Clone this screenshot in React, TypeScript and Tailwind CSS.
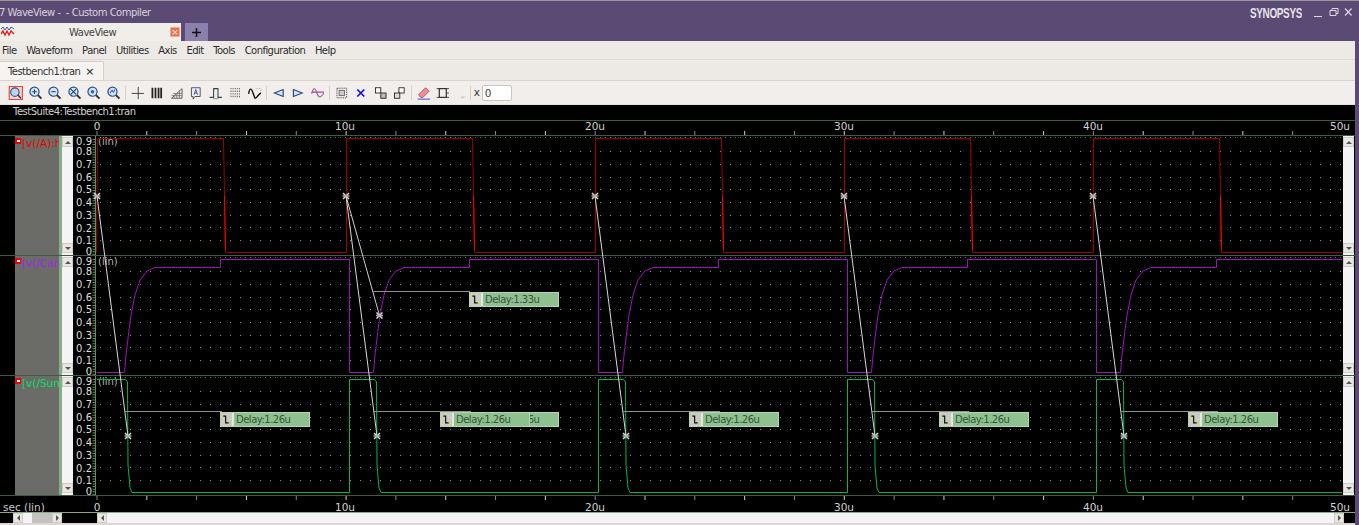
import type { ReactNode } from "react";

const FONT = "font-['DejaVu_Sans','Liberation_Sans',sans-serif]";
const PERIODS = [0, 249, 498, 747, 996];
const GRID = [151.5, 164.5, 177.5, 189.5, 202.5, 215.5, 227.5, 240.5];
const YLABELS: [string, number][] = [
  ["0.9", 145], ["0.8", 155], ["0.7", 168], ["0.6", 180.7], ["0.5", 193.4],
  ["0.4", 206], ["0.3", 219], ["0.2", 231.7], ["0.1", 244.4], ["0", 254.5],
];
const MINOR = Array.from({ length: 25 }, (_, i) => 97 + i * 49.82);
const MAJOR: [string, number][] = [["0", 97], ["10u", 345], ["20u", 595], ["30u", 844], ["40u", 1093], ["50u", 1342]];

function redWave() {
  let d = "M96.5,252.5 L97.5,138.5";
  PERIODS.forEach((o, k) => {
    if (k > 0) d += ` L${97.5 + o},252.5 L${97.5 + o},138.5`;
    d += ` L${223.5 + o},138.5 L${225.5 + o},252.5`;
  });
  return d + " L1342,252.5";
}

function purpleWave() {
  let d = "M97,252.5";
  PERIODS.forEach((o, k) => {
    if (k > 0) d += ` L${100.5 + o},139.5 L${100.5 + o},252.5`;
    d += ` L${124.5 + o},252.5 L${126 + o},235 L${129 + o},210 L${131 + o},195 L${135 + o},175 L${140 + o},160 L${147 + o},151 L${155 + o},147.5 L${165 + o},147.5 L${220.5 + o},147.5 L${220.5 + o},139.5`;
  });
  return d + " L1342,139.5";
}

function greenWave() {
  let d = "M97,139.5";
  PERIODS.forEach((o, k) => {
    if (k > 0) d += ` L${100.5 + o},252.5 L${100.5 + o},139.5`;
    d += ` L${125.5 + o},139.5 L${127.5 + o},142 L${128 + o},225 L${130 + o},248 L${132 + o},252.5`;
  });
  return d + " L1342,252.5";
}

function SmallArrow({ up }: { up?: boolean }) {
  return (
    <div className="h-[10px] w-full bg-[#e9e7e3] border border-[#cfcdc8] flex items-center justify-center">
      <div className={up
        ? "w-0 h-0 border-l-[3px] border-r-[3px] border-b-[3px] border-l-transparent border-r-transparent border-b-[#555]"
        : "w-0 h-0 border-l-[3px] border-r-[3px] border-t-[3px] border-l-transparent border-r-transparent border-t-[#555]"} />
    </div>
  );
}

function VScroll() {
  return (
    <div className="w-[11px] h-full bg-[#f5f3f5] flex flex-col justify-between pt-px pb-[2px]">
      <SmallArrow up />
      <SmallArrow />
    </div>
  );
}

function Panel({ label, color, children }: { label: string; color: string; children: ReactNode }) {
  return (
    <div className="h-[120px] flex border-b border-[#3e5a40]">
      <div className="w-[15px] bg-black" />
      <div className="w-[44px] bg-[#6b6c68] overflow-hidden whitespace-nowrap flex items-start pt-[2px] gap-px">
        <div className="w-[6px] h-[6px] shrink-0 bg-[#f00000] flex items-center justify-center">
          <div className="w-[3px] h-[2px] bg-white" />
        </div>
        <span className={`text-[10.5px] leading-[10px] ${color}`}>{label}</span>
      </div>
      <div className="w-[3px] bg-[#86ad88]" />
      <VScroll />
      <svg className="w-[1270px] h-[119px] shrink-0 bg-black" viewBox="73 136 1270 119">
        {GRID.map((y) => (
          <line key={y} x1="100" x2="1342" y1={y} y2={y} stroke="#8a8a8a" strokeWidth="1" strokeDasharray="1 9" />
        ))}
        <line x1="100" x2="1342" y1="137.5" y2="137.5" stroke="#666" strokeDasharray="1 4" />
        <line x1="95.5" x2="95.5" y1="136" y2="255" stroke="#5f8f62" />
        <line x1="94" x2="94" y1="139" y2="255" stroke="#5f8f62" strokeWidth="3" strokeDasharray="1 1.55" />
        {YLABELS.map(([t, y]) => (
          <text key={t} x="92" y={y} textAnchor="end" fontSize="10" fill="#dcdcdc" fontFamily="DejaVu Sans">{t}</text>
        ))}
        <text x="98" y="145" fontSize="10" fill="#b5b5b5" fontFamily="DejaVu Sans">(lin)</text>
        {children}
      </svg>
      <VScroll />
    </div>
  );
}

function StepIcon() {
  return (
    <svg viewBox="0 0 13 13" className="w-[13px] h-full shrink-0 bg-[#c9cbc4] border-r-2 border-[#dfe9dc]">
      <path d="M2,2.5 H5.5 V10.5 H10" fill="none" stroke="#111" strokeWidth="1.4" />
      <rect x="0.8" y="1.5" width="2" height="2" fill="#e8e000" />
      <rect x="9" y="9.5" width="2" height="2" fill="#e8e000" />
    </svg>
  );
}

function DelayTag({ value, className }: { value: string; className: string }) {
  return (
    <div className={`absolute flex w-[90px] h-[15px] bg-[#8fc08f] border border-[#b5d4b5] text-[#35553a] text-[10px] tracking-[-0.5px] leading-[13px] whitespace-nowrap overflow-hidden ${className}`}>
      <StepIcon />
      <span className="pl-[2px]">{value}</span>
    </div>
  );
}

function Marker({ x, y }: { x: number; y: number }) {
  return (
    <g stroke="#dcdcdc" strokeWidth="1.5">
      <line x1={x - 3} y1={y - 3} x2={x + 3} y2={y + 3} />
      <line x1={x - 3} y1={y + 3} x2={x + 3} y2={y - 3} />
      <line x1={x - 3.5} y1={y} x2={x + 3.5} y2={y} stroke="#a8a8a8" />
    </g>
  );
}

function Slot({ children }: { children: ReactNode }) {
  return (
    <svg viewBox="0 0 16 16" className="w-[19.6px] h-[14px] shrink-0" fill="none" stroke="#222" strokeWidth="1">
      {children}
    </svg>
  );
}

function Sep() {
  return (
    <div className="w-[4px] shrink-0 flex justify-center">
      <div className="w-px h-[14px] bg-[#d4d1cc]" />
    </div>
  );
}

function Mag({ children }: { children?: ReactNode }) {
  return (
    <>
      <circle cx="6.5" cy="6.5" r="5.2" fill="#d5e4f5" stroke="#2c4f86" strokeWidth="1.4" />
      <line x1="10.3" y1="10.3" x2="14.5" y2="14.5" stroke="#333" strokeWidth="2.2" />
      {children}
    </>
  );
}

function Toolbar() {
  return (
    <div className="h-[24px] bg-[#f2eeec] flex items-center pl-[6px] border-b border-[#e3e0dc]">
      <Slot>
        <rect x="0.5" y="0.5" width="15" height="15" fill="#f7d9d2" stroke="#e0483a" strokeWidth="1.3" />
        <circle cx="7" cy="7" r="4.8" fill="#bcd4ee" stroke="#2c4f86" strokeWidth="1.3" />
        <line x1="10" y1="10" x2="14" y2="14" stroke="#333" strokeWidth="1.6" />
      </Slot>
      <Slot><Mag><path d="M4,6.5 H9 M6.5,4 V9" stroke="#1c3f78" strokeWidth="1.2" /></Mag></Slot>
      <Slot><Mag><path d="M4,6.5 H9" stroke="#1c3f78" strokeWidth="1.2" /></Mag></Slot>
      <Slot><Mag><path d="M3.5,3.5 L9.5,9.5 M9.5,3.5 L3.5,9.5" stroke="#1c3f78" strokeWidth="1.2" /></Mag></Slot>
      <Slot><Mag><circle cx="6.5" cy="6.5" r="2" fill="#2962c4" stroke="none" /></Mag></Slot>
      <Slot><Mag><path d="M3.5,8 L6,5 L7.5,7 L9.5,4" stroke="#2962c4" strokeWidth="1.2" /></Mag></Slot>
      <Sep />
      <Slot><path d="M8.5,1 V15 M1,8.5 H15" stroke="#333" /></Slot>
      <Slot><path d="M3,2 V14 M6.5,2 V14 M10,2 V14 M13,2 V14" stroke="#222" strokeWidth="2" /></Slot>
      <Slot>
        <path d="M2,14 H14 V3 Z" stroke="#555" />
        <path d="M5,14 V11 M8,14 V8 M11,14 V5 M2,11 H14 M4,8.5 H14" stroke="#777" />
      </Slot>
      <Slot>
        <path d="M3,2 H13 V12 H7 L5,15 V12 H3 Z" stroke="#444" />
        <path d="M6,10 L8,4 L10,10 M6.8,8 H9.2" stroke="#2348b8" />
      </Slot>
      <Slot><path d="M1,13 H5.5 V3 H10.5 V13 H15" stroke="#2c4a4a" strokeWidth="1.2" /><path d="M5,14.5 H11" stroke="#888" /></Slot>
      <Slot><path d="M2,3 H14 M2,6 H14 M2,9 H14 M2,12 H14" stroke="#555" strokeWidth="1.6" strokeDasharray="1 1.4" /></Slot>
      <Slot>
        <path d="M1,9 C2,2 4,2 6,8 S8,15 10,13 S13,9 15,8" stroke="#111" strokeWidth="1.6" />
        <path d="M9,3 H15 V8" stroke="#aaa" strokeDasharray="1 1" />
      </Slot>
      <Sep />
      <Slot><path d="M13,4 V12 L3,8 Z" fill="#d7e2f0" stroke="#23497f" strokeWidth="1.3" /></Slot>
      <Slot><path d="M3,4 V12 L13,8 Z" fill="#d7e2f0" stroke="#23497f" strokeWidth="1.3" /></Slot>
      <Slot><path d="M1,9 C3,1 5,2 7,8 S11,14 15,8" stroke="#777" strokeWidth="1.2" /><path d="M1,7 H15" stroke="#d02bb0" strokeWidth="1.4" /></Slot>
      <Sep />
      <Slot>
        <rect x="2.5" y="2.5" width="11" height="11" stroke="#444" strokeDasharray="1.5 1" />
        <rect x="5" y="5" width="6" height="6" fill="#ccc" stroke="#666" />
      </Slot>
      <Slot><path d="M4,4 L12,12 M12,4 L4,12" stroke="#1010e0" strokeWidth="2" /></Slot>
      <Slot>
        <rect x="2" y="2" width="6" height="6" fill="#fff" stroke="#222" />
        <rect x="8" y="8" width="6" height="6" fill="#bbb" stroke="#222" />
      </Slot>
      <Slot>
        <rect x="7" y="2" width="6" height="6" fill="#fff" stroke="#222" />
        <rect x="2" y="8" width="6" height="6" fill="#ddd" stroke="#222" />
      </Slot>
      <Sep />
      <Slot>
        <path d="M2,10 L10,2 L14,6 L7,13 H4.5 Z" fill="#ec8f98" stroke="#b05060" />
        <path d="M1,15 H15" stroke="#1a3fd0" />
      </Slot>
      <Slot>
        <rect x="4" y="3" width="8" height="10" stroke="#333" strokeWidth="1.4" />
        <path d="M1,3 H4 M1,13 H4 M12,8 H15 M12,3 H15 M12,13 H15" stroke="#333" />
      </Slot>
      <Slot><path d="M5,12 H11 L8,14.5 Z" fill="#c9c9c9" stroke="none" /></Slot>
      <div className="w-px h-[14px] bg-[#d4d1cc] -ml-[3px] mr-[3px]" />
      <span className="text-[10.5px] text-[#333] w-[7px]">x</span>
      <div className="ml-[1px] w-[30px] h-[16px] bg-white border border-[#c9c6c1] rounded-[2px] text-[10.5px] leading-[14px] pl-[2px] text-[#444]">0</div>
    </div>
  );
}

const MENUS = ["File", "Waveform", "Panel", "Utilities", "Axis", "Edit", "Tools", "Configuration", "Help"];

function TopAxis() {
  return (
    <svg className="block w-[1355px] h-[14px] bg-black" viewBox="0 0 1355 14">
      {MINOR.map((x, i) => (
        <line key={i} x1={x} x2={x} y1="10" y2="14" stroke={i % 2 ? "#d0d0d0" : "#8a8a8a"} />
      ))}
      {MAJOR.map(([t, x]) => (
        <text key={t} x={x} y="9" textAnchor={t === "50u" ? "end" : "middle"} dx={t === "50u" ? 8 : 0} fontSize="10.5" fill="#d2d2d2" fontFamily="DejaVu Sans">{t}</text>
      ))}
    </svg>
  );
}

function BottomAxis() {
  return (
    <svg className="block w-[1355px] h-[16px] bg-black" viewBox="0 0 1355 16">
      {MINOR.map((x, i) => (
        <line key={i} x1={x} x2={x} y1="0" y2="4" stroke={i % 2 ? "#d0d0d0" : "#8a8a8a"} />
      ))}
      {MAJOR.map(([t, x]) => (
        <text key={t} x={x} y="15" textAnchor={t === "50u" ? "end" : "middle"} dx={t === "50u" ? 8 : 0} fontSize="10.5" fill="#d2d2d2" fontFamily="DejaVu Sans">{t}</text>
      ))}
      <text x="3" y="15" fontSize="10.5" fill="#c8c8c8" fontFamily="DejaVu Sans">sec (lin)</text>
    </svg>
  );
}

function HButton({ left }: { left?: boolean }) {
  return (
    <div className="w-[10px] h-full bg-[#e9e7e3] border border-[#cfcdc8] flex items-center justify-center shrink-0">
      <div className={left
        ? "w-0 h-0 border-t-[3px] border-b-[3px] border-r-[3px] border-t-transparent border-b-transparent border-r-[#555]"
        : "w-0 h-0 border-t-[3px] border-b-[3px] border-l-[3px] border-t-transparent border-b-transparent border-l-[#555]"} />
    </div>
  );
}

export default function App() {
  return (
    <div className={`w-[1359px] h-[525px] overflow-hidden bg-[#5b4a73] ${FONT} border-t border-[#9a96a0]`}>
      {/* title bar */}
      <div className="h-[22px] flex items-center pr-[7px] text-[#d6d2de] text-[10px] tracking-[-0.5px]">
        <span className="-ml-[1px] whitespace-pre">7 WaveView -  - Custom Compiler</span>
        <div className="flex-1" />
        <svg viewBox="0 0 52 13" className="w-[52px] h-[13px] mr-[10px]">
          <text x="0" y="12" fontSize="15" fontWeight="bold" fill="#e6e2ea" fontFamily="Liberation Sans" textLength="52" lengthAdjust="spacingAndGlyphs">SYNOPSYS</text>
        </svg>
        <svg viewBox="0 0 40 12" className="w-[40px] h-[12px]" stroke="#dcd8e2" fill="none">
          <path d="M2,10.5 H10" />
          <path d="M18,4.5 H24 V9.5 H18 Z M20,4.5 V2.5 H26 V7.5 H24" />
          <path d="M33,2.5 L39.5,9.5 M39.5,2.5 L33,9.5" strokeWidth="1.2" />
        </svg>
      </div>
      {/* window tabs */}
      <div className="h-[18px] flex items-stretch">
        <div className="w-[181px] bg-[#f1ede9] flex items-center relative">
          <svg viewBox="0 0 13 12" className="w-[13px] h-[12px] ml-px">
            <path d="M0,3 L2,1 L4,4 L6,1 L8,4 L10,1 L13,3" fill="none" stroke="#3460b0" />
            <path d="M0,8 L2,5 L4,9 L6,5 L8,9 L10,5 L13,8" fill="none" stroke="#e02020" strokeWidth="1.4" />
          </svg>
          <span className="absolute left-[69px] text-[10px] tracking-[-0.5px] text-[#444]">WaveView</span>
          <div className="absolute left-[170px] w-[10px] h-[10px] rounded-[1px] bg-[#e9714d] border border-[#f3a98e] flex items-center justify-center text-white text-[9px] leading-none">×</div>
        </div>
        <div className="ml-[4px] w-[23px] bg-[#8b7fab] flex items-center justify-center">
          <svg viewBox="0 0 11 11" className="w-[11px] h-[11px]"><path d="M5.5,1 V10 M1,5.5 H10" stroke="#111" strokeWidth="1.5" /></svg>
        </div>
      </div>
      <div className="w-[1355px]">
        {/* menu bar */}
        <div className="h-[19px] bg-[#edeae6] border-b border-[#dedbd6] flex items-center pl-[2px] gap-[9.6px] text-[10px] tracking-[-0.55px] text-[#2a2a2a]">
          {MENUS.map((m) => <span key={m}>{m}</span>)}
        </div>
        {/* document tabs */}
        <div className="h-[21px] bg-[#edeae6] border-b border-[#d8d5d0] flex items-end">
          <div className="w-[104px] h-[19px] bg-[#f6f3f1] border-r border-t border-[#d3d0cb] rounded-tr-[2px] flex items-center pl-[8px] gap-[5px] text-[10px] tracking-[-0.55px] text-[#333]">
            <span>Testbench1:tran</span>
            <span className="text-[11px] text-[#222] leading-none">×</span>
          </div>
        </div>
        <Toolbar />
        {/* waveform area */}
        <div className="bg-black">
          <div className="h-[16px] pl-[13px] text-[10px] tracking-[-0.5px] leading-[13px] text-[#d0d0d0] border-b border-[#3e5a40]">TestSuite4:Testbench1:tran</div>
          <TopAxis />
          <div className="relative border-t border-[#3e5a40]">
            <Panel label="[v(/A):hi" color="text-[#f00000]">
              <path d={redWave()} fill="none" stroke="#a00000" />
              {PERIODS.map((o) => (
                <path key={o} d={`M${224.5 + o},196 L${225.5 + o},250`} stroke="#ff0000" />
              ))}
            </Panel>
            <Panel label="[v(/Carry" color="text-[#a020f0]">
              <path d={purpleWave()} fill="none" stroke="#9a14b8" />
            </Panel>
            <Panel label="[v(/Sum" color="text-[#00e060]">
              <path d={greenWave()} fill="none" stroke="#00b850" />
            </Panel>
            {/* delay measurements lie over the plots */}
            <svg className="absolute inset-0 w-[1355px] h-[360px] pointer-events-none" viewBox="0 136 1355 360">
              {PERIODS.map((o) => (
                <g key={o}>
                  <line x1={97 + o} y1="196" x2={128 + o} y2="436" stroke="#d8d8d8" />
                  <line x1={125 + o} y1="411.5" x2={222 + o} y2="411.5" stroke="#8f8f8f" />
                  <Marker x={97 + o} y={196} />
                  <Marker x={128 + o} y={436} />
                </g>
              ))}
              <line x1="346" y1="196" x2="379.5" y2="315.5" stroke="#d0d0d0" />
              <line x1="373" y1="291.5" x2="470" y2="291.5" stroke="#8f8f8f" />
              <Marker x={379.5} y={315.5} />
            </svg>
            <DelayTag value="Delay:1.33u" className="left-[469px] top-[156px]" />
            <DelayTag value="Delay:1.26u" className="left-[220px] top-[276px]" />
            <DelayTag value="Delay:1.26u" className="left-[469px] top-[276px]" />
            <DelayTag value="Delay:1.26u" className="left-[440px] top-[276px]" />
            <DelayTag value="Delay:1.26u" className="left-[689px] top-[276px]" />
            <DelayTag value="Delay:1.26u" className="left-[939px] top-[276px]" />
            <DelayTag value="Delay:1.26u" className="left-[1188px] top-[276px]" />
          </div>
          <BottomAxis />
          {/* horizontal scrollbars */}
          <div className="h-[11px] border-t border-[#86ad88] flex">
            <div className="w-[13px]" />
            <HButton left />
            <div className="w-[9px] bg-[#f5f3f5]" />
            <div className="w-[20px] bg-[#c4c2c0]" />
            <HButton />
            <div className="w-[35px]" />
            <HButton left />
            <div className="flex-1 bg-[#f5f3f5]" />
            <HButton />
            <div className="w-[11px]" />
          </div>
        </div>
        <div className="h-[2px] bg-[#dcd9d3]" />
      </div>
    </div>
  );
}
